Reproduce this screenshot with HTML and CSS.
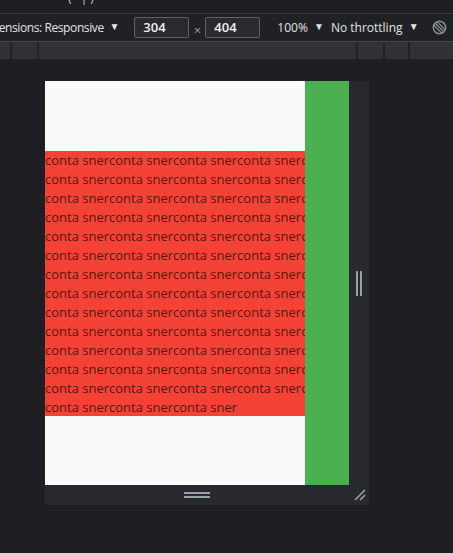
FILE: index.html
```html
<!DOCTYPE html>
<html>
<head>
<meta charset="utf-8">
<link rel="stylesheet" href="styles.css">
</head>
<body>
<div class="top"><span class="top-text">( |)</span></div>
<div class="toolbar">
  <span class="dim">Dimensions: Responsive <span class="caret">▼</span></span>
  <span class="box">304</span>
  <span class="times">×</span>
  <span class="box">404</span>
  <span class="zoom">100% <span class="caret">▼</span></span>
  <span class="throttle">No throttling <span class="caret">▼</span></span>
  <svg class="rotate" width="15" height="15" viewBox="0 0 14 14"><circle cx="7" cy="7" r="5.8" fill="none" stroke="#8a8d91" stroke-width="1.4"/><path d="M3.2 3.2 L10.8 10.8 M5.2 2 L12 8.8 M2 5.2 L8.8 12" stroke="#8a8d91" stroke-width="1.2" fill="none"/></svg>
</div>
<div class="ruler">
  <span class="seg s1"></span><span class="seg s2"></span><span class="seg s3"></span><span class="seg s4"></span><span class="seg s5"></span><span class="seg s6"></span>
</div>
<div class="stage">
  <div class="device">
    <div class="viewport">
      <div class="left">
        <div class="red">
          <div class="line">conta snerconta snerconta snerconta snerconta</div>
          <div class="line">conta snerconta snerconta snerconta snerconta</div>
          <div class="line">conta snerconta snerconta snerconta snerconta</div>
          <div class="line">conta snerconta snerconta snerconta snerconta</div>
          <div class="line">conta snerconta snerconta snerconta snerconta</div>
          <div class="line">conta snerconta snerconta snerconta snerconta</div>
          <div class="line">conta snerconta snerconta snerconta snerconta</div>
          <div class="line">conta snerconta snerconta snerconta snerconta</div>
          <div class="line">conta snerconta snerconta snerconta snerconta</div>
          <div class="line">conta snerconta snerconta snerconta snerconta</div>
          <div class="line">conta snerconta snerconta snerconta snerconta</div>
          <div class="line">conta snerconta snerconta snerconta snerconta</div>
          <div class="line">conta snerconta snerconta snerconta snerconta</div>
          <div class="line">conta snerconta snerconta sner</div>
        </div>
      </div>
      <div class="green"></div>
    </div>
    <div class="rhandle"><span class="vbar"></span><span class="vbar"></span></div>
    <div class="bhandle"><span class="hbar"></span><span class="hbar"></span></div>
    <div class="corner">
      <svg width="14" height="14" viewBox="0 0 14 14"><path d="M3 13 L13 3 M8 13 L13 8" stroke="#9aa0a6" stroke-width="1.6" fill="none"/></svg>
    </div>
  </div>
</div>
</body>
</html>
```
FILE: styles.css
```css
html, body {
  margin: 0;
  padding: 0;
  background: #1f1f23;
  width: 453px;
  height: 553px;
  overflow: hidden;
  font-family: "Open Sans", "Noto Sans", sans-serif;
}
.top {
  height: 13px;
  background: #1f1f23;
  border-bottom: 1px solid #3a3b3f;
  overflow: hidden;
}
.top-text {
  display: block;
  margin-left: 68px;
  margin-top: -11px;
  color: #c8c8c8;
  font-size: 12px;
  letter-spacing: 3px;
}
.toolbar {
  height: 27px;
  background: #202124;
  display: flex;
  align-items: center;
  color: #e3e3e3;
  font-size: 12px;
  white-space: nowrap;
  border-bottom: 1px solid #46474b;
}
.caret {
  font-size: 10px;
  margin-left: 3px;
  position: relative;
  top: -2px;
  letter-spacing: 0;
}
.dim {
  margin-left: -23px;
  letter-spacing: -0.4px;
}
.box {
  box-sizing: border-box;
  width: 55px;
  height: 21px;
  border: 1px solid #5f6368;
  border-radius: 2px;
  background: #2a2a2e;
  color: #f1f1f1;
  font-weight: 600;
  font-size: 13px;
  padding-left: 8px;
  line-height: 19px;
}
.dim + .box {
  margin-left: 15px;
}
.times {
  color: #9aa0a6;
  font-size: 13px;
  width: 16px;
  text-align: center;
  margin-top: 4px;
}
.zoom {
  margin-left: 17px;
}
.throttle {
  margin-left: 7px;
}
.rotate {
  margin-left: 13px;
}
.ruler {
  height: 17px;
  background: #323236;
  display: flex;
}
.seg {
  border-right: 2px solid #222226;
  height: 17px;
}
.s1 { width: 10px; }
.s2 { width: 25px; }
.s3 { width: 317px; }
.s4 { width: 25px; }
.s5 { width: 23px; }
.s6 { width: 0; border-right: none; }
.stage {
  padding: 22px 0 0 45px;
}
.device {
  display: grid;
  grid-template-columns: 304px 20px;
  grid-template-rows: 404px 20px;
  width: 324px;
}
.viewport {
  display: flex;
  background: #fafafa;
  overflow: hidden;
}
.left {
  width: 260px;
  display: flex;
  flex-direction: column;
  justify-content: center;
}
.red {
  background: #f44336;
  color: #5a140e;
  font-size: 13px;
  line-height: 19px;
  height: 265px;
  box-sizing: border-box;
}
.line {
  white-space: nowrap;
  overflow: hidden;
  width: 260px;
}
.green {
  width: 44px;
  background: #4caf50;
}
.rhandle {
  background: #28292d;
  display: flex;
  justify-content: center;
  align-items: center;
  gap: 2px;
  grid-row: 1 / 2;
  grid-column: 2 / 3;
}
.vbar {
  width: 2px;
  height: 25px;
  background: #9aa0a6;
}
.bhandle {
  background: #28292d;
  display: flex;
  flex-direction: column;
  justify-content: center;
  align-items: center;
  gap: 2px;
  grid-row: 2 / 3;
  grid-column: 1 / 2;
}
.hbar {
  width: 26px;
  height: 2px;
  background: #9aa0a6;
}
.corner {
  background: #28292d;
  grid-row: 2 / 3;
  grid-column: 2 / 3;
  display: flex;
  align-items: flex-end;
  justify-content: flex-start;
  padding: 0 0 4px 3px;
  box-sizing: border-box;
  border-bottom-right-radius: 3px;
}
.corner svg { display: block; }
```
